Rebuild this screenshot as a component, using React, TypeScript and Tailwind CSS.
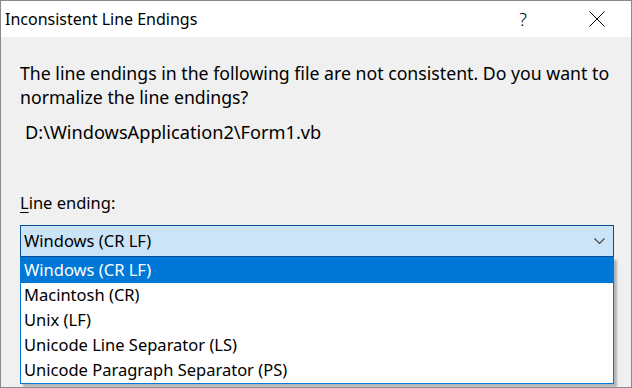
const OPTIONS = [
  "Windows (CR LF)",
  "Macintosh (CR)",
  "Unix (LF)",
  "Unicode Line Separator (LS)",
  "Unicode Paragraph Separator (PS)",
];

function CloseIcon() {
  return (
    <svg width="16" height="16" viewBox="0 0 16 16" className="block">
      <path d="M0.5 0.5 L15.5 15.5 M15.5 0.5 L0.5 15.5" stroke="#000" strokeWidth="1" fill="none" />
    </svg>
  );
}

function Chevron() {
  return (
    <svg width="11" height="7" viewBox="0 0 11 7" className="block">
      <path d="M0.5 0.5 L5.5 5.5 L10.5 0.5" stroke="#444" strokeWidth="1.2" fill="none" />
    </svg>
  );
}

export default function App() {
  const selected = 0;

  return (
    <div
      className="w-[632px] h-[388px] border border-[#8a8a8a] bg-[#f0f0f0] flex flex-col overflow-hidden text-black"
      style={{ fontFamily: '"Noto Sans", "Open Sans", sans-serif' }}
    >
      <div className="h-[36px] bg-white flex items-center shrink-0">
        <span className="pl-[4px] text-[16px] leading-none">Inconsistent Line Endings</span>
        <span className="ml-auto mr-[62px] text-[18px] leading-none font-light">?</span>
        <span className="mr-[26px]">
          <CloseIcon />
        </span>
      </div>

      <div className="relative flex-1 pl-[19px] pr-[12px] pt-[24px]">
        <p className="leading-[24px] text-[17.7px]">
          The line endings in the following file are not consistent. Do you want to normalize the line endings?
        </p>
        <p className="mt-[11px] pl-[5px] leading-[24px] text-[18.2px]">D:\WindowsApplication2\Form1.vb</p>

        <p className="mt-[47px] leading-[24px] text-[16.5px]">
          <span className="underline underline-offset-[3px]">L</span>ine ending:
        </p>

        <div className="relative mt-[10px] mr-[5px] text-[16.5px]">
          <div className="h-[32px] border border-[#0a4f94] bg-[#cce4f7] flex items-center pl-[3px] pr-[8px]">
            <span className="leading-none">{OPTIONS[selected]}</span>
            <span className="ml-auto">
              <Chevron />
            </span>
          </div>

          <ul className="absolute left-0 right-0 top-[32px] border border-[#0078d7] bg-white shadow-[3px_3px_2px_rgba(0,0,0,0.25)]">
            {OPTIONS.map((o, i) => (
              <li
                key={o}
                className={
                  "h-[25px] flex items-center pl-[3px] leading-none " +
                  (i === selected ? "bg-[#0078d7] text-white" : "")
                }
              >
                {o}
              </li>
            ))}
          </ul>
        </div>
      </div>
    </div>
  );
}
